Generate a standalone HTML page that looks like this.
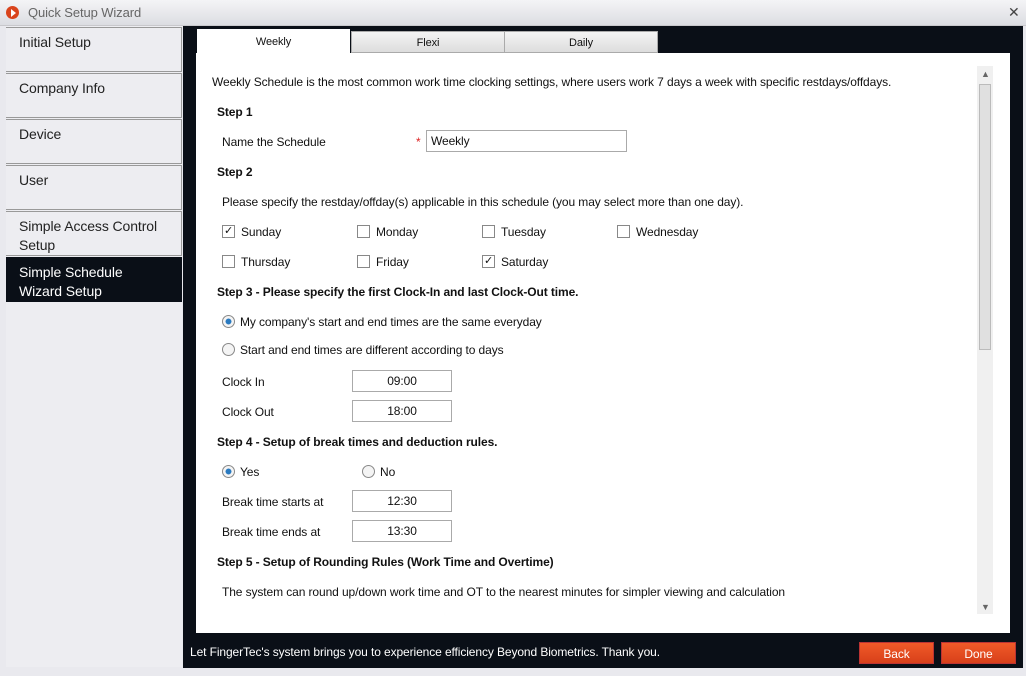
<!DOCTYPE html><html><head><style>
body{margin:0;width:1026px;height:676px;background:#e9e9ee;font-family:"Liberation Sans",sans-serif;font-size:12px;letter-spacing:-0.1px;color:#111;position:relative;overflow:hidden}
.a{position:absolute}
.title{left:0;top:0;width:1026px;height:25px;background:linear-gradient(#f4f4f6,#dcdde2);border-bottom:1px solid #c8c8cc}
.side{left:6px;width:176px;height:45px;background:#ededf1;border:1px solid #999;border-left:none;box-sizing:border-box;font-size:14px;padding:5px 13px;line-height:19px;color:#222}
.cb{width:11px;height:11px;border:1px solid #888;background:#fff}
.rd{width:11px;height:11px;border:1px solid #888;border-radius:50%;background:#f4f4f4}
.in{height:20px;border:1px solid #aaa;background:#fff;box-sizing:border-box;padding:0 4px;line-height:19px}
.b{font-weight:bold}
.btn{width:75px;height:22px;background:linear-gradient(#f05a28,#d8401a);color:#fff;text-align:center;line-height:22px;border:1px solid #b33;box-sizing:border-box}
</style></head><body>
<div class="a title"></div>
<div class="a" style="left:6px;top:6px;width:13px;height:13px;border-radius:50%;background:#d9441c"></div>
<div class="a" style="left:11px;top:9px;width:0;height:0;border-left:5px solid #fff;border-top:4px solid transparent;border-bottom:4px solid transparent"></div>
<div class="a" style="left:28px;top:5px;font-size:13px;color:#666">Quick Setup Wizard</div>
<div class="a" style="left:1008px;top:4px;font-size:14px;color:#444">✕</div>
<div class="a" style="left:6px;top:26px;width:176px;height:641px;background:#ededf1"></div>
<div class="a side" style="top:27px">Initial Setup</div>
<div class="a side" style="top:73px">Company Info</div>
<div class="a side" style="top:119px">Device</div>
<div class="a side" style="top:165px">User</div>
<div class="a side" style="top:211px">Simple Access Control Setup</div>
<div class="a side" style="top:257px;background:#0a0f17;color:#fff;border-color:#0a0f17">Simple Schedule Wizard Setup</div>
<div class="a" style="left:183px;top:26px;width:840px;height:642px;background:#0a0f17"></div>
<div class="a" style="left:197px;top:29px;width:153px;height:24px;background:#fff;text-align:center;line-height:26px;font-size:11px">Weekly</div>
<div class="a" style="left:351px;top:31px;width:152px;height:20px;background:linear-gradient(#f4f4f4,#ddd);border:1px solid #aaa;text-align:center;line-height:22px;font-size:11px">Flexi</div>
<div class="a" style="left:504px;top:31px;width:152px;height:20px;background:linear-gradient(#f4f4f4,#ddd);border:1px solid #aaa;text-align:center;line-height:22px;font-size:11px">Daily</div>
<div class="a" style="left:196px;top:53px;width:814px;height:580px;background:#fff"></div>
<div class="a" style="left:977px;top:66px;width:16px;height:548px;background:#f0f0f0"></div>
<div class="a" style="left:979px;top:84px;width:12px;height:266px;background:#e0e0e0;border:1px solid #bbb;box-sizing:border-box"></div>
<div class="a" style="left:981px;top:69px;font-size:9px;color:#666">▲</div>
<div class="a" style="left:981px;top:602px;font-size:9px;color:#666">▼</div>
<div class="a" style="left:212px;top:75px">Weekly Schedule is the most common work time clocking settings, where users work 7 days a week with specific restdays/offdays.</div>
<div class="a b" style="left:217px;top:105px">Step 1</div>
<div class="a" style="left:222px;top:135px">Name the Schedule</div>
<div class="a" style="left:416px;top:135px;color:#d22">*</div>
<div class="a in" style="left:426px;top:130px;width:201px;height:22px;line-height:21px">Weekly</div>
<div class="a b" style="left:217px;top:165px">Step 2</div>
<div class="a" style="left:222px;top:195px">Please specify the restday/offday(s) applicable in this schedule (you may select more than one day).</div>
<div class="a cb" style="left:222px;top:225px;font-size:11px;line-height:11px;text-align:center">✓</div><div class="a" style="left:241px;top:225px">Sunday</div>
<div class="a cb" style="left:357px;top:225px"></div><div class="a" style="left:376px;top:225px">Monday</div>
<div class="a cb" style="left:482px;top:225px"></div><div class="a" style="left:501px;top:225px">Tuesday</div>
<div class="a cb" style="left:617px;top:225px"></div><div class="a" style="left:636px;top:225px">Wednesday</div>
<div class="a cb" style="left:222px;top:255px"></div><div class="a" style="left:241px;top:255px">Thursday</div>
<div class="a cb" style="left:357px;top:255px"></div><div class="a" style="left:376px;top:255px">Friday</div>
<div class="a cb" style="left:482px;top:255px;font-size:11px;line-height:11px;text-align:center">✓</div><div class="a" style="left:501px;top:255px">Saturday</div>
<div class="a b" style="left:217px;top:285px">Step 3 - Please specify the first Clock-In and last Clock-Out time.</div>
<div class="a rd" style="left:222px;top:315px;background:radial-gradient(#2a7ac0 35%,#f4f4f4 40%)"></div><div class="a" style="left:240px;top:315px">My company's start and end times are the same everyday</div>
<div class="a rd" style="left:222px;top:343px"></div><div class="a" style="left:240px;top:343px">Start and end times are different according to days</div>
<div class="a" style="left:222px;top:375px">Clock In</div><div class="a in" style="left:352px;top:370px;width:100px;height:22px;line-height:21px;text-align:center">09:00</div>
<div class="a" style="left:222px;top:405px">Clock Out</div><div class="a in" style="left:352px;top:400px;width:100px;height:22px;line-height:21px;text-align:center">18:00</div>
<div class="a b" style="left:217px;top:435px">Step 4 - Setup of break times and deduction rules.</div>
<div class="a rd" style="left:222px;top:465px;background:radial-gradient(#2a7ac0 35%,#f4f4f4 40%)"></div><div class="a" style="left:240px;top:465px">Yes</div>
<div class="a rd" style="left:362px;top:465px"></div><div class="a" style="left:380px;top:465px">No</div>
<div class="a" style="left:222px;top:495px">Break time starts at</div><div class="a in" style="left:352px;top:490px;width:100px;height:22px;line-height:21px;text-align:center">12:30</div>
<div class="a" style="left:222px;top:525px">Break time ends at</div><div class="a in" style="left:352px;top:520px;width:100px;height:22px;line-height:21px;text-align:center">13:30</div>
<div class="a b" style="left:217px;top:555px">Step 5 - Setup of Rounding Rules (Work Time and Overtime)</div>
<div class="a" style="left:222px;top:585px">The system can round up/down work time and OT to the nearest minutes for simpler viewing and calculation</div>
<div class="a" style="left:190px;top:645px;color:#fff">Let FingerTec's system brings you to experience efficiency Beyond Biometrics. Thank you.</div>
<div class="a btn" style="left:859px;top:642px">Back</div>
<div class="a btn" style="left:941px;top:642px">Done</div>
</body></html>
